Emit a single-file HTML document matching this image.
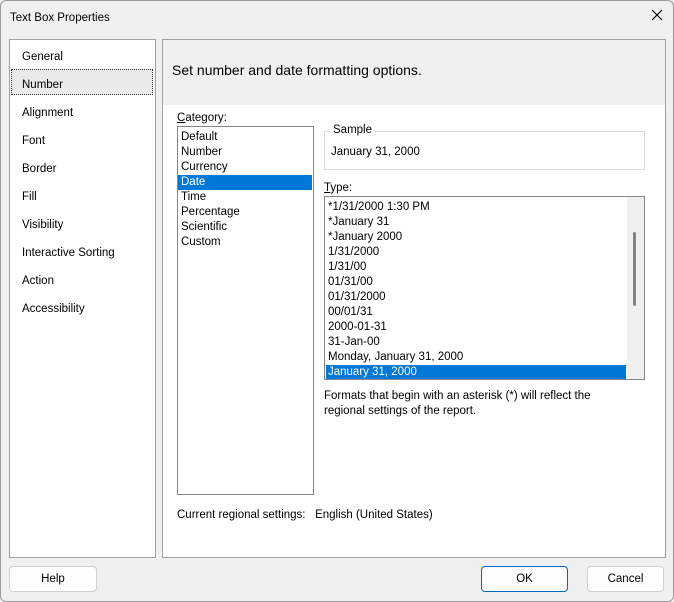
<!DOCTYPE html>
<html><head><style>
*{box-sizing:border-box;margin:0;padding:0}
body{width:674px;height:602px;background:#f0f0f0;font-family:"Liberation Sans",sans-serif;font-size:11.5px;color:#000;position:relative;overflow:hidden}
.a{position:absolute;white-space:nowrap;line-height:18px}
.box{position:absolute;background:#fff;border:1px solid #a0a0a0}
.btn{position:absolute;background:#fdfdfd;border:1px solid #d0d0d0;border-radius:4px;text-align:center;line-height:24px}
.li{height:15px;line-height:15px;padding-left:3px}
</style></head><body>
<div class="a" style="left:0;top:0;width:674px;height:602px;border:1px solid #9a9a9a;border-radius:6px;z-index:5;pointer-events:none"></div>
<div class="a" style="left:10px;top:9px">Text Box Properties</div>
<svg class="a" style="left:651px;top:9px" width="12" height="12"><path d="M1 1L11 11M11 1L1 11" stroke="#000" stroke-width="1.2"/></svg>

<div class="box" style="left:9px;top:39px;width:147px;height:519px"></div>
<div class="a" style="left:22px;top:48px">General</div>
<div class="a" style="left:11px;top:69px;width:142px;height:26px;background:#eaeaea;border:1px dotted #333"></div>
<div class="a" style="left:22px;top:76px">Number</div>
<div class="a" style="left:22px;top:104px">Alignment</div>
<div class="a" style="left:22px;top:132px">Font</div>
<div class="a" style="left:22px;top:160px">Border</div>
<div class="a" style="left:22px;top:188px">Fill</div>
<div class="a" style="left:22px;top:216px">Visibility</div>
<div class="a" style="left:22px;top:244px">Interactive Sorting</div>
<div class="a" style="left:22px;top:272px">Action</div>
<div class="a" style="left:22px;top:300px">Accessibility</div>

<div class="box" style="left:162px;top:39px;width:504px;height:519px"></div>
<div class="a" style="left:163px;top:40px;width:502px;height:65px;background:#f0f0f0"></div>
<div class="a" style="left:172px;top:60px;font-size:14px;line-height:20px">Set number and date formatting options.</div>

<div class="a" style="left:177px;top:109px"><u>C</u>ategory:</div>
<div class="box" style="left:177px;top:126px;width:137px;height:369px;border-color:#828790;padding-top:3px">
<div class="li">Default</div><div class="li">Number</div><div class="li">Currency</div>
<div class="li" style="background:#0078d7;color:#fff;margin-right:1px">Date</div>
<div class="li">Time</div><div class="li">Percentage</div><div class="li">Scientific</div><div class="li">Custom</div>
</div>

<div class="a" style="left:324px;top:131px;width:321px;height:39px;border:1px solid #dcdcdc"></div>
<div class="a" style="left:330px;top:122px;background:#fff;padding:0 3px;line-height:16px">Sample</div>
<div class="a" style="left:331px;top:143px">January 31, 2000</div>

<div class="a" style="left:324px;top:179px"><u>T</u>ype:</div>
<div class="box" style="left:324px;top:196px;width:321px;height:184px;border-color:#828790;padding-top:3px;overflow:hidden">
<div class="li">*1/31/2000 1:30 PM</div><div class="li">*January 31</div><div class="li">*January 2000</div>
<div class="li">1/31/2000</div><div class="li">1/31/00</div><div class="li">01/31/00</div><div class="li">01/31/2000</div>
<div class="li">00/01/31</div><div class="li">2000-01-31</div><div class="li">31-Jan-00</div><div class="li">Monday, January 31, 2000</div>
<div class="li" style="background:#0078d7;color:#fff;width:300px;margin-left:1px;padding-left:2px">January 31, 2000</div>
</div>
<div class="a" style="left:627px;top:197px;width:17px;height:182px;background:#f0f0f0"></div>
<div class="a" style="left:633px;top:232px;width:3px;height:74px;background:#858585;border-radius:2px"></div>

<div class="a" style="left:324px;top:387px;line-height:15px;padding-top:2px">Formats that begin with an asterisk (*) will reflect the<br>regional settings of the report.</div>

<div class="a" style="left:177px;top:506px">Current regional settings:&nbsp;&nbsp;&nbsp;English (United States)</div>

<div class="btn" style="left:9px;top:566px;width:88px;height:26px">Help</div>
<div class="btn" style="left:481px;top:566px;width:87px;height:26px;border-color:#0067c0">OK</div>
<div class="btn" style="left:587px;top:566px;width:77px;height:26px">Cancel</div>
</body></html>
